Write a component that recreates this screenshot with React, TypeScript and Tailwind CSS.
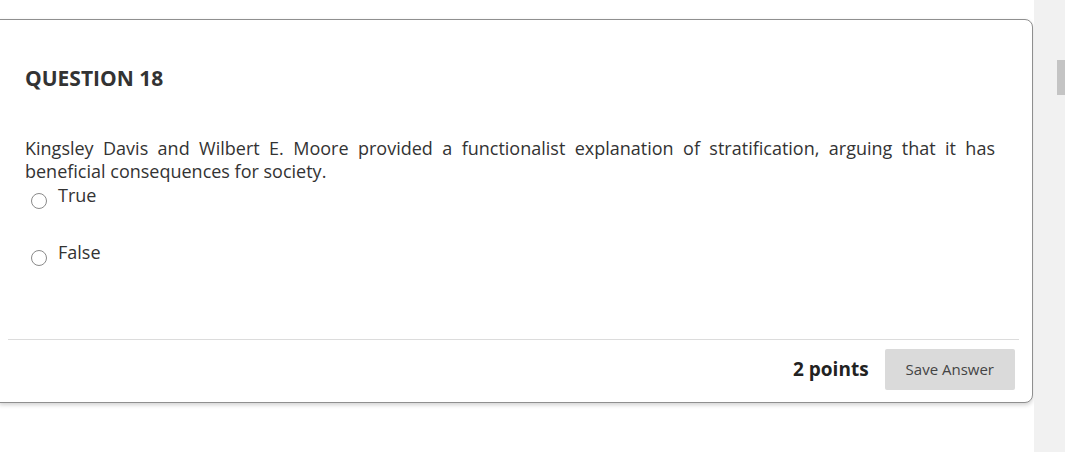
import React from 'react';

const font = { fontFamily: '"Open Sans", "Noto Sans", Arial, sans-serif' };

function Radio() {
  return (
    <span className="mt-[10px] ml-[6px] box-border inline-block h-[16px] w-[16px] flex-none rounded-full border border-[#8a8a8a] bg-white" />
  );
}

export default function App() {
  const options = ['True', 'False'];
  return (
    <div className="flex h-screen w-full overflow-hidden bg-white text-[#333]" style={font}>
      <div className="min-w-0 flex-1 pt-[19px]">
        <div className="-ml-px box-border w-[1034px] rounded-r-[8px] border border-[#8f8f8f] bg-white shadow-[0_2px_4px_rgba(0,0,0,0.18)]">
          <div className="pt-[44px] pr-[37px] pl-[25px]">
            <h2 className="text-[21px] leading-[28px] font-bold text-[#333]">QUESTION 18</h2>
            <p className="mt-[45px] text-justify text-[18px] leading-[23px] text-[#333]">
              Kingsley Davis and Wilbert E. Moore provided a functionalist explanation of stratification,
              arguing that it has beneficial consequences for society.
            </p>
            <div className="flex flex-col gap-[31px]">
              {options.map((o) => (
                <label key={o} className="flex items-start gap-[11px] text-[18px] leading-[25px] text-[#333]">
                  <Radio />
                  <span>{o}</span>
                </label>
              ))}
            </div>
          </div>
          <div className="mt-[73px] mr-[13px] ml-[8px] border-t border-[#dcdcdc]" />
          <div className="flex items-center justify-end gap-[16px] pt-[9px] pr-[17px] pb-[12px]">
            <span className="text-[19px] font-bold text-[#222]">2 points</span>
            <button className="h-[41px] rounded-[2px] bg-[#dadada] px-[21px] text-[15px] text-[#444]">
              Save Answer
            </button>
          </div>
        </div>
      </div>
      <div className="flex w-[31px] flex-none justify-end bg-[#f1f1f1]">
        <div className="mt-[60px] h-[35px] w-[8px] bg-[#c4c4c4]" />
      </div>
    </div>
  );
}
